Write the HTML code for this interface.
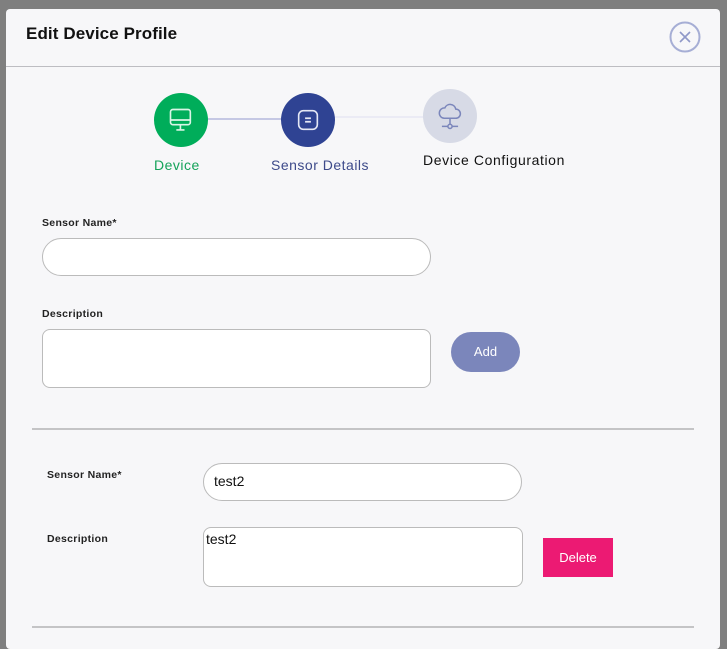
<!DOCTYPE html>
<html><head><meta charset="utf-8"><style>
*{box-sizing:border-box;margin:0;padding:0}
body{width:727px;height:629px;overflow:hidden;background:#7f7f7f;font-family:"Liberation Sans",sans-serif;position:relative}
.m{position:absolute;left:6px;top:9px;width:714px;height:640px;background:#f7f7f9;border-radius:4px}
.a{position:absolute}
.t{left:26px;top:24px;font-size:17px;color:#111;font-weight:bold;letter-spacing:0.1px}
.hr{left:6px;top:66px;width:714px;height:1px;background:#bdbdc2}
.lab{font-size:10.5px;font-weight:bold;color:#222;letter-spacing:0.3px}
.inp{background:#fff;border:1px solid #bbb}
.circ{border-radius:50%}
.st{font-size:14px;letter-spacing:0.5px}
</style></head><body>
<div class="m"></div>
<div class="a t">Edit Device Profile</div>
<svg class="a" style="left:669px;top:21px" width="32" height="32" viewBox="0 0 32 32"><circle cx="16" cy="16" r="14.5" fill="none" stroke="#a6aed5" stroke-width="2"/><path d="M11 11L21 21M21 11L11 21" stroke="#8f98c8" stroke-width="1.6"/></svg>
<div class="a hr"></div>
<div class="a" style="left:207px;top:118px;width:76px;height:2px;background:#c5c8e4"></div>
<div class="a" style="left:334px;top:116px;width:91px;height:2px;background:#ebebf5"></div>
<div class="a circ" style="left:154px;top:93px;width:54px;height:54px;background:#00ad5a"></div>
<svg class="a" style="left:167px;top:106px" width="28" height="28" viewBox="0 0 24 24" fill="none" stroke="#d9f5e6" stroke-width="1.4"><rect x="3" y="3" width="17" height="13" rx="2"/><path d="M3 12H20M11.5 16V20M8 20.5H15"/></svg>
<div class="a circ" style="left:281px;top:93px;width:54px;height:54px;background:#2f4393"></div>
<svg class="a" style="left:294px;top:106px" width="28" height="28" viewBox="0 0 24 24" fill="none" stroke="#e5e8f5" stroke-width="1.4"><rect x="4" y="4" width="16" height="16" rx="4"/><path d="M9.5 10.5H14.5M9.5 13.5H14.5"/></svg>
<div class="a circ" style="left:423px;top:89px;width:54px;height:54px;background:#d7dae6"></div>
<svg class="a" style="left:436px;top:101px" width="28" height="30" viewBox="0 0 24 26" fill="none" stroke="#7b86bb" stroke-width="1.3"><path d="M7 15H17a4 4 0 0 0 0-8a5 5 0 0 0-9.5-1A4.5 4.5 0 0 0 7 15Z"/><path d="M12 15V20M5 22H10M14 22H19"/><circle cx="12" cy="22" r="1.8"/></svg>
<div class="a st" style="left:154px;top:157px;color:#15a35a">Device</div>
<div class="a st" style="left:271px;top:157px;color:#3d4a8a">Sensor Details</div>
<div class="a st" style="left:423px;top:152px;color:#111;letter-spacing:0.6px">Device Configuration</div>
<div class="a lab" style="left:42px;top:217px">Sensor Name*</div>
<div class="a inp" style="left:42px;top:238px;width:389px;height:38px;border-radius:19px"></div>
<div class="a lab" style="left:42px;top:308px">Description</div>
<div class="a inp" style="left:42px;top:329px;width:389px;height:59px;border-radius:8px"></div>
<div class="a" style="left:451px;top:332px;width:69px;height:40px;border-radius:20px;background:#7b86bb;color:#fff;font-size:13px;text-align:center;line-height:40px">Add</div>
<div class="a" style="left:32px;top:428px;width:662px;height:2px;background:#c4c4c6"></div>
<div class="a lab" style="left:47px;top:469px">Sensor Name*</div>
<div class="a inp" style="left:203px;top:463px;width:319px;height:38px;border-radius:19px;font-size:14px;padding:9px 10px;color:#111">test2</div>
<div class="a lab" style="left:47px;top:533px">Description</div>
<div class="a inp" style="left:203px;top:527px;width:320px;height:60px;border-radius:8px;font-size:14px;padding:3px 2px;color:#111">test2</div>
<div class="a" style="left:543px;top:538px;width:70px;height:39px;background:#ec1a73;color:#fff;font-size:13px;text-align:center;line-height:39px">Delete</div>
<div class="a" style="left:32px;top:626px;width:662px;height:2px;background:#c4c4c6"></div>
</body></html>
